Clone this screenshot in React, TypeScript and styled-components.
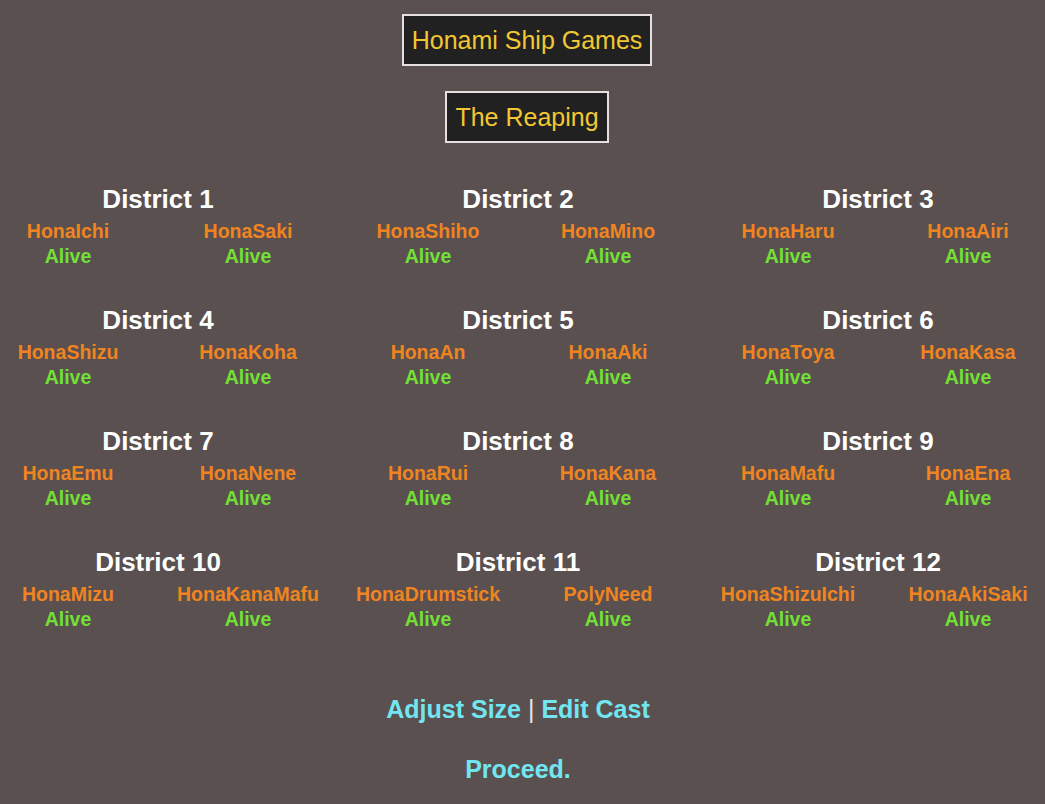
import React from 'react';
import styled, { createGlobalStyle } from 'styled-components';

type Tribute = { name: string; status: string };
type District = { title: string; tributes: Tribute[] };

const names: string[][] = [
  ['HonaIchi', 'HonaSaki'],
  ['HonaShiho', 'HonaMino'],
  ['HonaHaru', 'HonaAiri'],
  ['HonaShizu', 'HonaKoha'],
  ['HonaAn', 'HonaAki'],
  ['HonaToya', 'HonaKasa'],
  ['HonaEmu', 'HonaNene'],
  ['HonaRui', 'HonaKana'],
  ['HonaMafu', 'HonaEna'],
  ['HonaMizu', 'HonaKanaMafu'],
  ['HonaDrumstick', 'PolyNeed'],
  ['HonaShizuIchi', 'HonaAkiSaki'],
];

const districts: District[] = names.map((pair, i) => ({
  title: `District ${i + 1}`,
  tributes: pair.map((name) => ({ name, status: 'Alive' })),
}));

const GlobalStyle = createGlobalStyle`
  html, body {
    margin: 0;
    padding: 0;
    background: #5a5050;
    overflow: hidden;
  }
  body {
    font-family: "Liberation Sans", Arial, sans-serif;
  }
`;

const Page = styled.div`
  width: 1045px;
  height: 804px;
  display: flex;
  flex-direction: column;
  align-items: center;
  padding-top: 14px;
  box-sizing: border-box;
  overflow: hidden;
`;

const TitleBox = styled.div<{ $gap?: number }>`
  background: #212121;
  border: 2px solid #e4e0e0;
  color: #f2c832;
  font-size: 25px;
  line-height: 29px;
  padding: 10px 8px 9px;
  margin-left: 9px;
  margin-bottom: ${(p) => p.$gap ?? 0}px;
`;

const Grid = styled.div`
  width: 1080px;
  margin-left: -22px;
  align-self: flex-start;
  margin-top: 41px;
  display: grid;
  grid-template-columns: repeat(3, 360px);
  row-gap: 36px;
`;

const DistrictCell = styled.div`
  display: flex;
  flex-direction: column;
  align-items: center;
`;

const DistrictTitle = styled.div`
  color: #ffffff;
  font-weight: bold;
  font-size: 26px;
  line-height: 30px;
  margin-bottom: 5px;
`;

const TributeRow = styled.div`
  display: grid;
  grid-template-columns: 180px 180px;
`;

const TributeCell = styled.div`
  display: flex;
  flex-direction: column;
  align-items: center;
  font-weight: bold;
  font-size: 19.5px;
  line-height: 25px;
  white-space: nowrap;
`;

const Name = styled.span`
  color: #ef8420;
`;

const Status = styled.span`
  color: #72e034;
`;

const LinkLine = styled.div<{ $top: number }>`
  margin-top: ${(p) => p.$top}px;
  margin-right: 9px;
  font-size: 25px;
  line-height: 30px;
  font-weight: bold;
  color: #72e6f0;
`;

const Divider = styled.span`
  color: #e8e4e4;
  font-weight: normal;
`;

function App() {
  return (
    <Page>
      <GlobalStyle />
      <TitleBox $gap={25}>Honami Ship Games</TitleBox>
      <TitleBox>The Reaping</TitleBox>
      <Grid>
        {districts.map((d) => (
          <DistrictCell key={d.title}>
            <DistrictTitle>{d.title}</DistrictTitle>
            <TributeRow>
              {d.tributes.map((t) => (
                <TributeCell key={t.name}>
                  <Name>{t.name}</Name>
                  <Status>{t.status}</Status>
                </TributeCell>
              ))}
            </TributeRow>
          </DistrictCell>
        ))}
      </Grid>
      <LinkLine $top={62}>
        Adjust Size <Divider>|</Divider> Edit Cast
      </LinkLine>
      <LinkLine $top={30}>Proceed.</LinkLine>
    </Page>
  );
}

export default App;
